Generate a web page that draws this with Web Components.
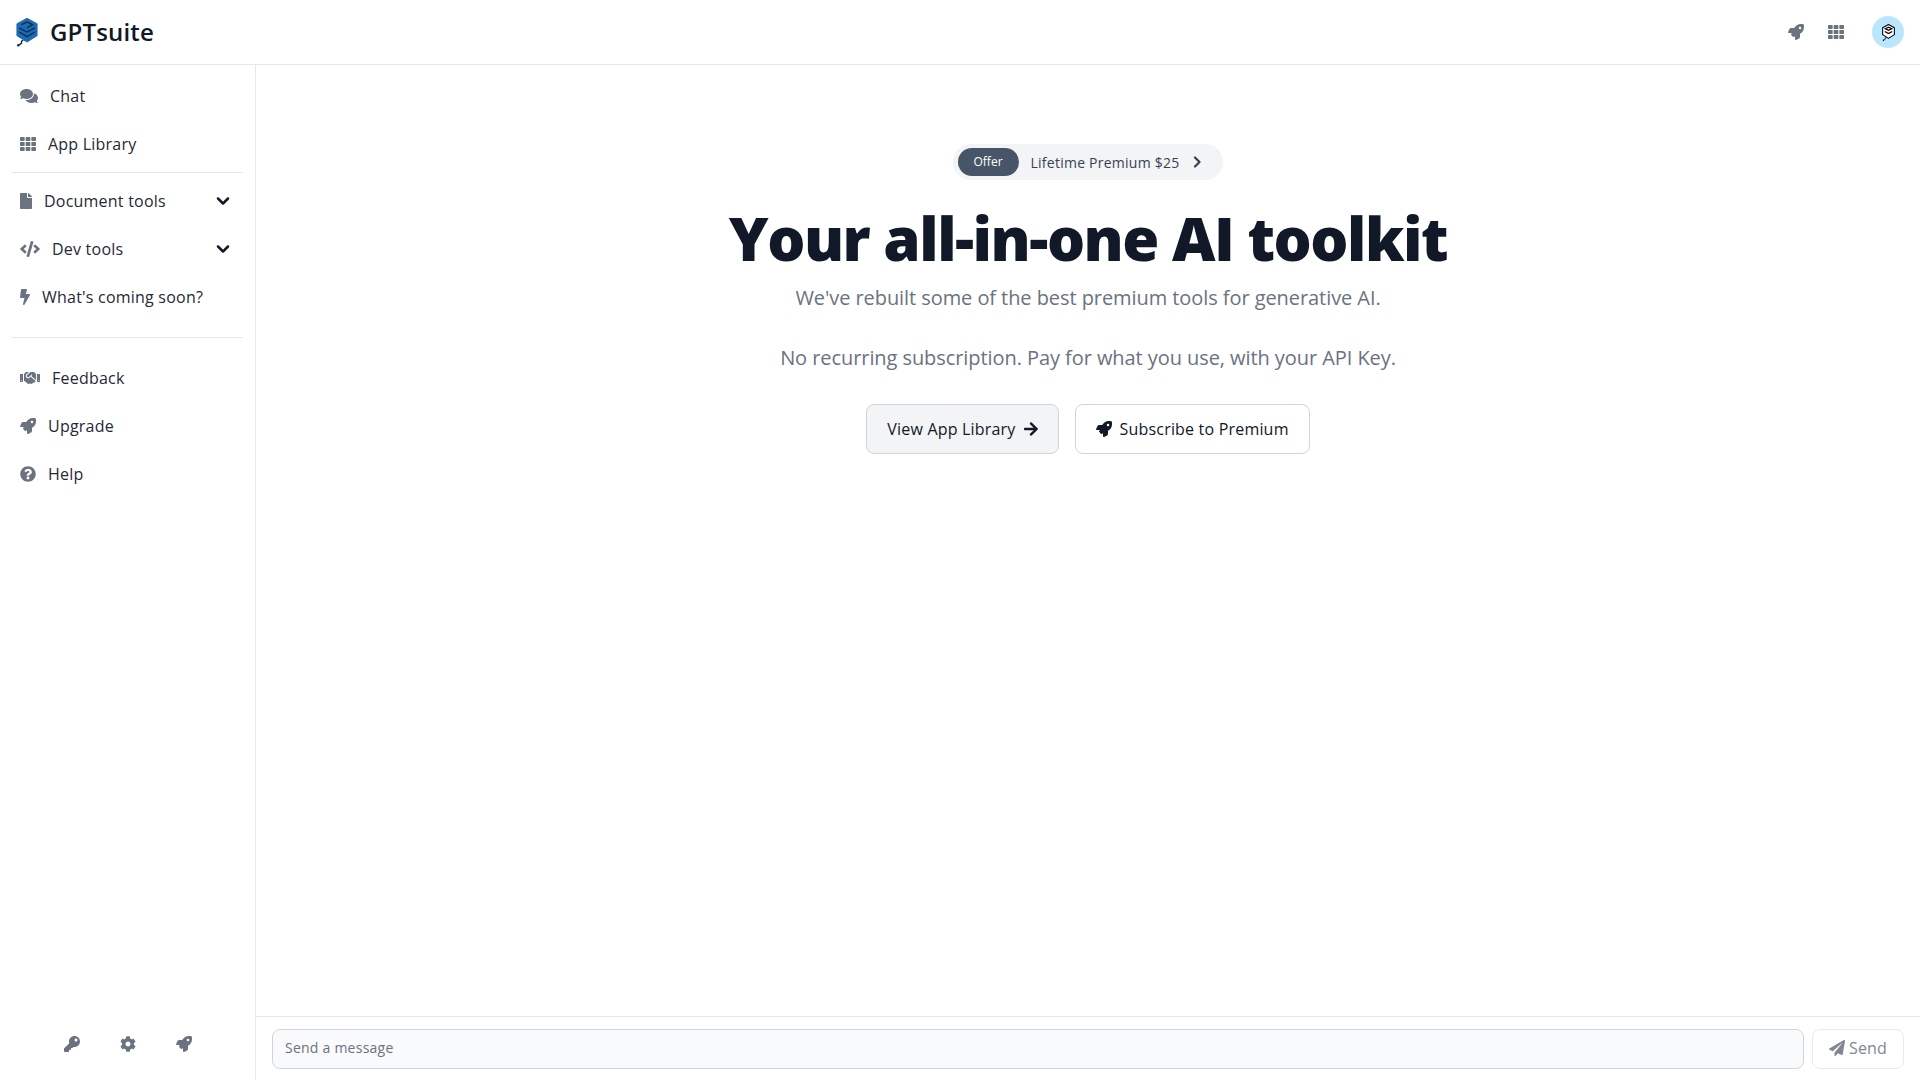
<!DOCTYPE html>
<html lang="en">
<head>
<meta charset="utf-8">
<title>GPTsuite</title>
<style>
	html, body { margin: 0; height: 100%; }
	body { font-family: "Open Sans", sans-serif; background: #fff; color: #1f2937; }
</style>
</head>
<body>
<gs-app>
	<gs-header slot="header"></gs-header>
	<gs-sidebar slot="sidebar"></gs-sidebar>
	<gs-hero slot="main"></gs-hero>
	<gs-composer slot="footer"></gs-composer>
</gs-app>

<script>
(function() {
	const ICONS = {
		rocket: [512, 'M505.12 19.09c-1.19-5.53-6.66-11-12.21-12.19C460.72 0 435.51 0 410.41 0 307.18 0 245.27 55.2 199.05 128H94.84c-16.35.02-35.56 11.88-42.89 26.48L2.52 253.3A28.4 28.4 0 0 0 0 264a24 24 0 0 0 24 24h103.82l-22.48 22.47c-11.36 11.36-13 32.26 0 45.25l50.91 50.91c11.16 11.19 32.16 13.16 45.28 0L224 384.16V488a24 24 0 0 0 24 24 28.56 28.56 0 0 0 10.71-2.52l98.73-49.39c14.63-7.3 26.51-26.5 26.51-42.86V312.8c72.6-46.31 128.03-108.41 128.03-211.09.1-25.21.1-50.41-6.86-82.62zM384.04 168A40 40 0 1 1 424.05 128a40.02 40.02 0 0 1-40.01 40z'],
		comments: [576, 'M416 192c0-88.4-93.1-160-208-160S0 103.6 0 192c0 34.3 14.1 65.9 38 92-13.4 30.2-35.5 54.2-35.8 54.5-2.2 2.3-2.8 5.7-1.5 8.7S4.8 352 8 352c36.6 0 66.9-12.3 88.7-25 32.2 15.7 70.3 25 111.3 25 114.9 0 208-71.6 208-160zm122 220c23.9-26 38-57.7 38-92 0-66.9-53.5-124.2-129.3-148.1.9 6.6 1.3 13.3 1.3 20.1 0 105.9-107.7 192-240 192-10.8 0-21.3-.8-31.7-1.9C207.8 439.6 281.8 480 368 480c41 0 79.1-9.2 111.3-25 21.8 12.7 52.1 25 88.7 25 3.2 0 6.1-1.9 7.3-4.8 1.3-2.9.7-6.3-1.5-8.7-.3-.3-22.4-24.2-35.8-54.5z'],
		grid: [512, 'M0 56a24 24 0 0 1 24-24h101a24 24 0 0 1 24 24v80a24 24 0 0 1-24 24H24a24 24 0 0 1-24-24zM181 56a24 24 0 0 1 24-24h102a24 24 0 0 1 24 24v80a24 24 0 0 1-24 24H205a24 24 0 0 1-24-24zM363 56a24 24 0 0 1 24-24h101a24 24 0 0 1 24 24v80a24 24 0 0 1-24 24H387a24 24 0 0 1-24-24zM0 216a24 24 0 0 1 24-24h101a24 24 0 0 1 24 24v80a24 24 0 0 1-24 24H24a24 24 0 0 1-24-24zM181 216a24 24 0 0 1 24-24h102a24 24 0 0 1 24 24v80a24 24 0 0 1-24 24H205a24 24 0 0 1-24-24zM363 216a24 24 0 0 1 24-24h101a24 24 0 0 1 24 24v80a24 24 0 0 1-24 24H387a24 24 0 0 1-24-24zM0 376a24 24 0 0 1 24-24h101a24 24 0 0 1 24 24v80a24 24 0 0 1-24 24H24a24 24 0 0 1-24-24zM181 376a24 24 0 0 1 24-24h102a24 24 0 0 1 24 24v80a24 24 0 0 1-24 24H205a24 24 0 0 1-24-24zM363 376a24 24 0 0 1 24-24h101a24 24 0 0 1 24 24v80a24 24 0 0 1-24 24H387a24 24 0 0 1-24-24z'],
		file: [384, 'M224 136V0H24C10.7 0 0 10.7 0 24v464c0 13.3 10.7 24 24 24h336c13.3 0 24-10.7 24-24V160H248c-13.2 0-24-10.8-24-24zm160-14.1v6.1H256V0h6.1c6.4 0 12.5 2.5 17 7l97.9 98c4.5 4.5 7 10.6 7 16.9z'],
		code: [640, 'M278.9 511.5l-61-17.7c-6.4-1.8-10-8.5-8.2-14.9L346.2 8.7c1.8-6.4 8.5-10.1 14.9-8.2l61 17.7c6.4 1.8 10 8.5 8.2 14.9L293.8 503.3c-1.9 6.4-8.5 10.1-14.9 8.2zm-114-112.2l43.5-46.4c4.6-4.9 4.3-12.7-.8-17.2L117 256l90.6-79.7c5.1-4.5 5.5-12.3.8-17.2l-43.5-46.4c-4.5-4.8-12.1-5.1-17-.5L3.8 247.2c-5.1 4.7-5.1 12.8 0 17.5l144.1 135.1c4.9 4.6 12.5 4.4 17-.5zm327.2.6l144.1-135.1c5.1-4.7 5.1-12.8 0-17.5L492.1 112.1c-4.8-4.5-12.4-4.3-17 .5L431.6 159c-4.6 4.9-4.3 12.7.8 17.2L523 256l-90.6 79.7c-5.1 4.5-5.5 12.3-.8 17.2l43.5 46.4c4.5 4.9 12.1 5.1 17 .6z'],
		bolt: [320, 'M296 160H180.6l42.6-129.8C227.2 15 215.7 0 200 0H56C44 0 33.8 8.9 32.2 20.8l-32 240C-1.7 275.2 9.5 288 24 288h118.7L96.6 482.5c-3.6 15.2 8 29.5 23.3 29.5 8.4 0 16.4-4.4 20.8-12l176-304c9.3-15.9-2.2-36-20.7-36z'],
		handshake: [640, 'M434.7 64h-85.9c-8 0-15.7 3-21.6 8.4l-98.3 90c-.1.1-.2.3-.3.4-16.6 15.6-16.3 40.5-2.1 56 12.7 13.9 39.4 17.6 56.1 2.7.1-.1.3-.1.4-.2l79.9-73.2c6.5-5.9 16.7-5.5 22.6 1 6 6.5 5.5 16.6-1 22.6l-26.1 23.9L504 313.8c2.9 2.4 5.5 5 7.9 7.7V128l-54.6-54.6c-5.9-6-14.1-9.4-22.6-9.4zM544 128.2v223.9c0 17.7 14.3 32 32 32h64V128.2h-96zm48 223.9c-8.8 0-16-7.2-16-16s7.2-16 16-16 16 7.2 16 16-7.2 16-16 16zM0 384h64c17.7 0 32-14.3 32-32V128.2H0V384zm48-63.9c8.8 0 16 7.2 16 16s-7.2 16-16 16-16-7.2-16-16c0-8.9 7.2-16 16-16zm435.9 18.6L334.6 217.5l-30 27.5c-29.7 27.1-75.2 24.5-101.7-4.4-26.9-29.4-24.8-74.9 4.4-101.7L289.1 64h-83.8c-8.5 0-16.6 3.4-22.6 9.4L128 128v223.9h18.3l90.5 81.9c27.4 22.3 67.7 18.1 90-9.3l.2-.2 17.9 15.5c15.9 13 39.4 10.5 52.3-5.4l31.4-38.6 5.4 4.4c13.7 11.1 33.9 9.1 45-4.7l9.5-11.7c11.2-13.8 9.1-33.9-4.6-45.1z'],
		help: [512, 'M504 256c0 136.997-111.043 248-248 248S8 392.997 8 256C8 119.083 119.043 8 256 8s248 111.083 248 248zM262.655 90c-54.497 0-89.255 22.957-116.549 63.758-3.536 5.286-2.353 12.415 2.715 16.258l34.699 26.31c5.205 3.947 12.621 3.008 16.665-2.122 17.864-22.658 30.113-35.797 57.303-35.797 20.429 0 45.698 13.148 45.698 32.958 0 14.976-12.363 22.667-32.534 33.976C247.128 238.528 216 254.941 216 296v4c0 6.627 5.373 12 12 12h56c6.627 0 12-5.373 12-12v-1.333c0-28.462 83.186-29.647 83.186-106.667 0-58.002-60.165-102-116.531-102zM256 338c-25.365 0-46 20.635-46 46 0 25.364 20.635 46 46 46s46-20.636 46-46c0-25.365-20.635-46-46-46z'],
		key: [512, 'M512 176.001C512 273.203 433.202 352 336 352c-11.22 0-22.19-1.062-32.827-3.069l-24.012 27.014A23.999 23.999 0 0 1 261.223 384H224v40c0 13.255-10.745 24-24 24h-40v40c0 13.255-10.745 24-24 24H24c-13.255 0-24-10.745-24-24v-78.059c0-6.365 2.529-12.47 7.029-16.971l161.802-161.802C163.108 213.814 160 195.271 160 176 160 78.798 238.797.001 335.999 0 433.488-.001 512 78.511 512 176.001zM336 128c0 26.51 21.49 48 48 48s48-21.49 48-48-21.49-48-48-48-48 21.49-48 48z'],
		cog: [512, 'M487.4 315.7l-42.6-24.6c4.3-23.2 4.3-47 0-70.2l42.6-24.6c4.9-2.8 7.1-8.6 5.5-14-11.1-35.6-30-67.8-54.7-94.6-3.8-4.1-10-5.1-14.8-2.3L380.8 110c-17.9-15.4-38.5-27.3-60.8-35.1V25.8c0-5.6-3.9-10.5-9.4-11.7-36.7-8.2-74.3-7.8-109.2 0-5.5 1.2-9.4 6.1-9.4 11.7V75c-22.2 7.9-42.8 19.8-60.8 35.1L88.7 85.5c-4.9-2.8-11-1.9-14.8 2.3-24.7 26.7-43.6 58.9-54.7 94.6-1.7 5.4.6 11.2 5.5 14L67.3 221c-4.3 23.2-4.3 47 0 70.2l-42.6 24.6c-4.9 2.8-7.1 8.6-5.5 14 11.1 35.6 30 67.8 54.7 94.6 3.8 4.1 10 5.1 14.8 2.3l42.6-24.6c17.9 15.4 38.5 27.3 60.8 35.1v49.2c0 5.6 3.9 10.5 9.4 11.7 36.7 8.2 74.3 7.8 109.2 0 5.5-1.2 9.4-6.1 9.4-11.7v-49.2c22.2-7.9 42.8-19.8 60.8-35.1l42.6 24.6c4.9 2.8 11 1.9 14.8-2.3 24.7-26.7 43.6-58.9 54.7-94.6 1.5-5.5-.7-11.3-5.6-14.1zM256 336c-44.1 0-80-35.9-80-80s35.9-80 80-80 80 35.9 80 80-35.9 80-80 80z'],
		plane: [512, 'M476 3.2L12.5 270.6c-18.1 10.4-15.8 35.6 2.2 43.2L121 358.4l287.3-253.2c5.5-4.9 13.3 2.6 8.6 8.3L176 407v80.5c0 23.6 28.5 32.9 42.5 15.8L282 426l124.6 52.2c14.2 6 30.4-2.9 33-18.2l72-432C515 7.8 493.3-6.8 476 3.2z'],
		arrow: [448, 'M190.5 66.9l22.2-22.2c9.4-9.4 24.6-9.4 33.9 0L441 239c9.4 9.4 9.4 24.6 0 33.9L246.6 467.3c-9.4 9.4-24.6 9.4-33.9 0l-22.2-22.2c-9.5-9.5-9.3-25 .4-34.3L311.4 296H24c-13.3 0-24-10.7-24-24v-32c0-13.3 10.7-24 24-24h287.4L190.9 101.2c-9.8-9.3-10-24.8-.4-34.3z']
	};

	class GsIcon extends HTMLElement {
		connectedCallback() {
			let icon = ICONS[this.getAttribute('name')];
			let size = this.getAttribute('size') || 16;
			let w = icon[0] / 512 * size;
			this.attachShadow({ mode: 'open' }).innerHTML = `
				<style>:host { display: inline-flex; flex: none; } svg { display: block; fill: currentColor; }</style>
				<svg width="${w}" height="${size}" viewBox="0 0 ${icon[0]} 512"><path d="${icon[1]}"/></svg>`;
		}
	}
	customElements.define('gs-icon', GsIcon);

	// hexagon logo, the little one in the avatar is white with thin dark lines
	class GsLogo extends HTMLElement {
		connectedCallback() {
			let mono = this.hasAttribute('mono');
			let fill = mono ? '#fff' : '#1c6ab0';
			let line = mono ? '#000' : '#0c2c55';
			let inner = mono
				? 'M6 9 L12 6 L18 9 L12 12 Z M5 14 L12 18 L19 14'
				: 'M6 8 L12 5 L18 8 L12 11.5 M3.5 11.5 L12 16 L20.5 11.5 M3.5 16 L12 21 L20.5 16';
			this.attachShadow({ mode: 'open' }).innerHTML = `
				<style>:host { display: inline-flex; flex: none; } svg { display: block; }</style>
				<svg width="${this.getAttribute('width') || 24}" height="${this.getAttribute('height') || 32}" viewBox="0 0 24 32">
					<path d="M12 1 L23 7 V20 L12 27 L1 20 V7 Z" fill="${fill}" stroke="${mono ? line : fill}" stroke-width="${mono ? 2 : 1}" stroke-linejoin="round"/>
					<path d="${inner}" fill="none" stroke="${line}" stroke-width="${mono ? 2.4 : 1.5}"/>
					<path d="M8 25 L6 26 V28.5 L2.5 30.5" fill="none" stroke="${line}" stroke-width="1.5"/>
					<circle cx="2.5" cy="30.5" r="1.3" fill="${line}"/>
				</svg>`;
		}
	}
	customElements.define('gs-logo', GsLogo);

	const appTmpl = document.createElement('template');
	appTmpl.innerHTML = `
		<style>
			:host {
				display: grid;
				grid-template-columns: 256px 1fr;
				grid-template-rows: 65px 1fr auto;
				grid-template-areas: "header header" "sidebar main" "sidebar footer";
				height: 1080px;
				box-sizing: border-box;
			}
			.h { grid-area: header; }
			.s { grid-area: sidebar; min-height: 0; }
			.m { grid-area: main; min-height: 0; }
			.f { grid-area: footer; }
		</style>
		<div class="h"><slot name="header"></slot></div>
		<div class="s"><slot name="sidebar"></slot></div>
		<div class="m"><slot name="main"></slot></div>
		<div class="f"><slot name="footer"></slot></div>
	`;
	class GsApp extends HTMLElement {
		constructor() {
			super();
			this.attachShadow({ mode: 'open' }).appendChild(appTmpl.content.cloneNode(true));
		}
	}
	customElements.define('gs-app', GsApp);

	const headerTmpl = document.createElement('template');
	headerTmpl.innerHTML = `
		<style>
			:host {
				display: flex;
				align-items: center;
				justify-content: space-between;
				height: 65px;
				box-sizing: border-box;
				padding: 0 16px;
				border-bottom: 1px solid #e5e7eb;
			}
			.brand { display: flex; align-items: center; gap: 12px; }
			.name { font-size: 24px; font-weight: 600; letter-spacing: .15px; color: #111827; line-height: 32px; }
			.right { display: flex; align-items: center; color: #6b7280; }
			.right gs-icon:first-child { margin-right: 24px; }
			.avatar {
				margin-left: 28px;
				width: 32px;
				height: 32px;
				border-radius: 50%;
				background: #bae6fd;
				display: flex;
				align-items: center;
				justify-content: center;
			}
		</style>
		<div class="brand">
			<gs-logo width="22" height="30"></gs-logo>
			<span class="name">GPTsuite</span>
		</div>
		<div class="right">
			<gs-icon name="rocket"></gs-icon>
			<gs-icon name="grid"></gs-icon>
			<div class="avatar"><gs-logo mono width="13" height="17"></gs-logo></div>
		</div>
	`;
	class GsHeader extends HTMLElement {
		constructor() {
			super();
			this.attachShadow({ mode: 'open' }).appendChild(headerTmpl.content.cloneNode(true));
		}
	}
	customElements.define('gs-header', GsHeader);

	const navTmpl = document.createElement('template');
	navTmpl.innerHTML = `
		<style>
			:host {
				display: flex;
				align-items: center;
				height: 48px;
				padding: 0 22px 0 20px;
				gap: 12px;
				font-size: 16px;
				letter-spacing: .22px;
				color: #1f2937;
			}
			.icon { display: flex; color: #6b7280; }
			.label { flex: 1; }
			svg { display: none; }
			:host([expand]) svg { display: block; }
		</style>
		<span class="icon"><slot name="icon"></slot></span>
		<span class="label"><slot></slot></span>
		<svg width="20" height="20" viewBox="0 0 20 20" fill="none" stroke="#111827" stroke-width="2.5" stroke-linecap="round" stroke-linejoin="round"><path d="M5 7.5 L10 12.5 L15 7.5"/></svg>
	`;
	class GsNavItem extends HTMLElement {
		constructor() {
			super();
			this.attachShadow({ mode: 'open' }).appendChild(navTmpl.content.cloneNode(true));
		}
	}
	customElements.define('gs-nav-item', GsNavItem);

	const sideTmpl = document.createElement('template');
	sideTmpl.innerHTML = `
		<style>
			:host {
				display: flex;
				flex-direction: column;
				height: 100%;
				box-sizing: border-box;
				border-right: 1px solid #e5e7eb;
				padding-top: 7px;
			}
			hr { border: 0; border-top: 1px solid #e5e7eb; margin: 4px 12px; }
			hr.wide { margin: 16px 12px; }
			.grow { flex: 1; }
			.tools {
				display: flex;
				justify-content: center;
				gap: 40px;
				padding-bottom: 28px;
				color: #6b7280;
			}
		</style>
		<gs-nav-item><gs-icon slot="icon" name="comments"></gs-icon>Chat</gs-nav-item>
		<gs-nav-item><gs-icon slot="icon" name="grid"></gs-icon>App Library</gs-nav-item>
		<hr>
		<gs-nav-item expand><gs-icon slot="icon" name="file"></gs-icon>Document tools</gs-nav-item>
		<gs-nav-item expand><gs-icon slot="icon" name="code"></gs-icon>Dev tools</gs-nav-item>
		<gs-nav-item><gs-icon slot="icon" name="bolt"></gs-icon>What's coming soon?</gs-nav-item>
		<hr class="wide">
		<gs-nav-item><gs-icon slot="icon" name="handshake"></gs-icon>Feedback</gs-nav-item>
		<gs-nav-item><gs-icon slot="icon" name="rocket"></gs-icon>Upgrade</gs-nav-item>
		<gs-nav-item><gs-icon slot="icon" name="help"></gs-icon>Help</gs-nav-item>
		<div class="grow"></div>
		<div class="tools">
			<gs-icon name="key"></gs-icon>
			<gs-icon name="cog"></gs-icon>
			<gs-icon name="rocket"></gs-icon>
		</div>
	`;
	class GsSidebar extends HTMLElement {
		constructor() {
			super();
			this.attachShadow({ mode: 'open' }).appendChild(sideTmpl.content.cloneNode(true));
		}
	}
	customElements.define('gs-sidebar', GsSidebar);

	const btnTmpl = document.createElement('template');
	btnTmpl.innerHTML = `
		<style>
			:host {
				display: inline-flex;
				align-items: center;
				gap: 8px;
				height: 50px;
				box-sizing: border-box;
				padding: 0 20px;
				border: 1px solid #d1d5db;
				border-radius: 8px;
				background: #fff;
				color: #111827;
				font-size: 16px;
				font-weight: 500;
				letter-spacing: .19px;
			}
			:host([soft]) { background: #f3f4f6; }
		</style>
		<slot></slot>
	`;
	class GsButton extends HTMLElement {
		constructor() {
			super();
			this.attachShadow({ mode: 'open' }).appendChild(btnTmpl.content.cloneNode(true));
		}
	}
	customElements.define('gs-button', GsButton);

	const heroTmpl = document.createElement('template');
	heroTmpl.innerHTML = `
		<style>
			:host {
				display: flex;
				flex-direction: column;
				align-items: center;
				padding-top: 79px;
				text-align: center;
			}
			.pill {
				display: flex;
				align-items: center;
				height: 36px;
				box-sizing: border-box;
				padding: 0 20px 0 5px;
				border-radius: 18px;
				background: #f3f4f6;
				color: #374151;
				font-size: 14px;
				letter-spacing: .24px;
			}
			.offer {
				height: 28px;
				width: 61px;
				border-radius: 14px;
				background: #475569;
				color: #fff;
				font-size: 12px;
				letter-spacing: 0;
				line-height: 28px;
				margin-right: 12px;
			}
			.pill svg { margin-left: 12px; }
			h1 {
				margin: 22px 0 0;
				font-size: 60px;
				line-height: 72px;
				font-weight: 800;
				letter-spacing: -0.025em;
				color: #111827;
			}
			p {
				margin: 9px 0 0;
				font-size: 20px;
				line-height: 30px;
				letter-spacing: -.07px;
				color: #6b7280;
			}
			p.second { margin-top: 30px; }
			.actions { display: flex; gap: 16px; margin-top: 31px; }
		</style>
		<div class="pill">
			<div class="offer">Offer</div>
			<span>Lifetime Premium $25</span>
			<svg width="12" height="12" viewBox="0 0 12 12" fill="none" stroke="#374151" stroke-width="2.2" stroke-linecap="round" stroke-linejoin="round"><path d="M4 1.5 L8.5 6 L4 10.5"/></svg>
		</div>
		<h1>Your all-in-one AI toolkit</h1>
		<p>We've rebuilt some of the best premium tools for generative AI.</p>
		<p class="second">No recurring subscription. Pay for what you use, with your API Key.</p>
		<div class="actions">
			<gs-button soft>View App Library <gs-icon name="arrow"></gs-icon></gs-button>
			<gs-button><gs-icon name="rocket"></gs-icon> Subscribe to Premium</gs-button>
		</div>
	`;
	class GsHero extends HTMLElement {
		constructor() {
			super();
			this.attachShadow({ mode: 'open' }).appendChild(heroTmpl.content.cloneNode(true));
		}
	}
	customElements.define('gs-hero', GsHero);

	const composerTmpl = document.createElement('template');
	composerTmpl.innerHTML = `
		<style>
			:host {
				display: flex;
				gap: 8px;
				padding: 12px 16px 11px;
				border-top: 1px solid #e5e7eb;
			}
			input {
				flex: 1;
				height: 40px;
				box-sizing: border-box;
				padding: 0 12px 3px;
				border: 1px solid #d1d5db;
				border-radius: 8px;
				background: #f9fafb;
				font: 14px "Open Sans", sans-serif;
				letter-spacing: .24px;
				color: #111827;
				outline: none;
			}
			input::placeholder { color: #6b7280; opacity: 1; }
			.send {
				display: flex;
				align-items: center;
				gap: 4px;
				height: 40px;
				box-sizing: border-box;
				width: 92px;
				padding-bottom: 2px;
				justify-content: center;
				border: 1px solid #e5e7eb;
				border-radius: 8px;
				background: #fff;
				color: #6b7280;
				font: 400 16px "Open Sans", sans-serif;
				letter-spacing: .2px;
				opacity: .85;
			}
		</style>
		<input type="text" placeholder="Send a message">
		<div class="send"><gs-icon name="plane"></gs-icon>Send</div>
	`;
	class GsComposer extends HTMLElement {
		constructor() {
			super();
			this.attachShadow({ mode: 'open' }).appendChild(composerTmpl.content.cloneNode(true));
		}
	}
	customElements.define('gs-composer', GsComposer);
})();
</script>
</body>
</html>
